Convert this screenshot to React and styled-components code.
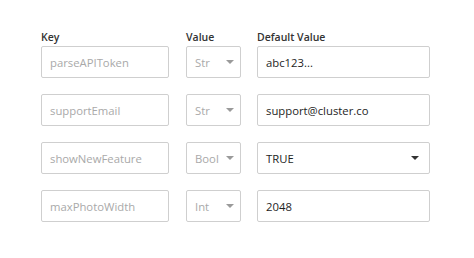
import React from 'react'
import styled, { createGlobalStyle } from 'styled-components'

const Global = createGlobalStyle`
    body {
        margin: 0;
        background: #fff;
        font-family: 'Open Sans', 'Liberation Sans', sans-serif;
    }
`

const Form = styled.main`
    display: grid;
    grid-template-columns: 128px 56px 173px;
    column-gap: 16px;
    row-gap: 16px;
    padding: 30px 0 0 41px;
    align-items: center;
`

const Label = styled.div`
    font-size: 10.5px;
    font-weight: 600;
    color: #333;
    margin-bottom: -14px;
    margin-left: ${p => p.shift || 0}px;
`

const Field = styled.div`
    display: flex;
    align-items: center;
    justify-content: space-between;
    box-sizing: border-box;
    height: 32px;
    padding: 0 ${p => p.right || 9}px 0 8px;
    border: 1px solid #cfcfcf;
    border-radius: 2px;
    background: #fff;
    font-size: 11.3px;
    color: ${p => p.muted ? '#a9a9a9' : '#1e1e1e'};
    margin-left: ${p => p.shift || 0}px;
`

const Caret = styled.span`
    width: 0;
    height: 0;
    border-left: 4px solid transparent;
    border-right: 4px solid transparent;
    border-top: 4px solid ${p => p.dark ? '#333' : '#9a9a9a'};
`

const rows = [
    { key: 'parseAPIToken', type: 'Str', value: 'abc123...' },
    { key: 'supportEmail', type: 'Str', value: 'support@cluster.co' },
    { key: 'showNewFeature', type: 'Bool', value: 'TRUE', select: true },
    { key: 'maxPhotoWidth', type: 'Int', value: '2048' },
]

export default function App() {
    return (
        <>
            <Global />
            <Form>
                <Label>Key</Label>
                <Label shift={1}>Value</Label>
                <Label>Default Value</Label>
                {rows.map(row => (
                    <React.Fragment key={row.key}>
                        <Field muted>{row.key}</Field>
                        <Field muted right={6} shift={1}>
                            {row.type}
                            <Caret />
                        </Field>
                        <Field right={row.select ? 10 : 9}>
                            {row.value}
                            {row.select && <Caret dark />}
                        </Field>
                    </React.Fragment>
                ))}
            </Form>
        </>
    )
}
